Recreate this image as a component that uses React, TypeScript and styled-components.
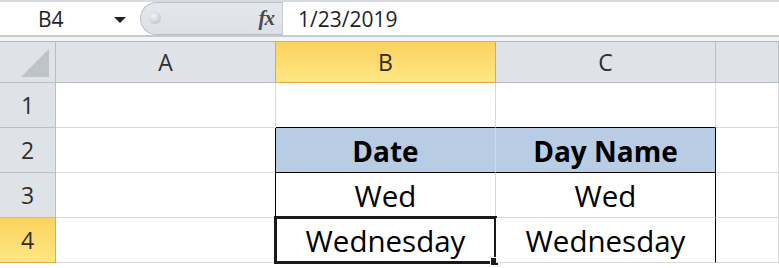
import styled, { createGlobalStyle } from 'styled-components';

const GlobalStyle = createGlobalStyle`
  html, body {
    margin: 0;
    padding: 0;
    background: #ffffff;
    overflow: hidden;
  }
`;

const Window = styled.div`
  width: 779px;
  height: 268px;
  overflow: hidden;
  font-family: 'Open Sans', 'Noto Sans', sans-serif;
  background: #ffffff;
`;

const FormulaBar = styled.div`
  display: flex;
  height: 35px;
  box-sizing: border-box;
  border-top: 2px solid #d7dbe1;
  background: #ffffff;
`;

const NameBox = styled.div`
  width: 140px;
  display: flex;
  align-items: center;
  box-sizing: border-box;
  padding-left: 38px;
  padding-right: 14px;
  font-size: 21px;
  color: #1f1f1f;
  justify-content: space-between;
`;

const DropArrow = styled.span`
  width: 0;
  height: 0;
  border-left: 6px solid transparent;
  border-right: 6px solid transparent;
  border-top: 6px solid #222;
  margin-top: 2px;
`;

const Pill = styled.div`
  width: 142px;
  display: flex;
  align-items: center;
  justify-content: space-between;
  box-sizing: border-box;
  background: linear-gradient(#e4e7ec, #dde1e7);
  border: 1px solid #b9bfc8;
  border-right: none;
  border-radius: 18px 0 0 18px;
  padding: 0 8px 0 8px;
`;

const Knob = styled.span`
  width: 12px;
  height: 12px;
  border-radius: 50%;
  background: radial-gradient(circle at 40% 35%, #f4f5f7, #b4b8be);
  margin-top: -2px;
`;

const Fx = styled.span`
  font-family: 'Liberation Serif', serif;
  font-style: italic;
  font-weight: bold;
  font-size: 21px;
  color: #4a4a4a;
  letter-spacing: -1px;
`;

const FormulaInput = styled.div`
  flex: 1;
  display: flex;
  align-items: center;
  padding-left: 15px;
  border-left: 1px solid #c8ccd2;
  font-size: 21px;
  color: #1f1f1f;
`;

const Splitter = styled.div`
  height: 7px;
  box-sizing: border-box;
  border-top: 2px solid #c6cbd2;
  border-bottom: 1px solid #aeb4bd;
  background: #f3f4f6;
`;

const Grid = styled.div`
  display: grid;
  grid-template-columns: 56px 220px 220px 220px 1fr;
  grid-template-rows: 41px repeat(4, 45px);
`;

const HeaderCell = styled.div<{ $active?: boolean }>`
  display: flex;
  align-items: center;
  justify-content: center;
  box-sizing: border-box;
  font-size: 23px;
  color: #2e2e2e;
  background: ${({ $active }) =>
    $active ? 'linear-gradient(#fbd25f, #ffe784)' : '#dfe3e8'};
  border-right: 1px solid ${({ $active }) => ($active ? '#e3a949' : '#b9bec5')};
  border-bottom: 1px solid ${({ $active }) => ($active ? '#e3a949' : '#b9bec5')};
  ${({ $active }) => ($active ? 'border-left: 1px solid #e3a949; margin-left: -1px;' : '')}
`;

const Corner = styled(HeaderCell)`
  align-items: flex-end;
  justify-content: flex-end;
  padding: 0 6px 5px 0;
`;

const CornerTriangle = styled.span`
  width: 0;
  height: 0;
  border-left: 28px solid transparent;
  border-bottom: 28px solid #bfc4ca;
`;

const Cell = styled.div<{
  $fill?: string;
  $bold?: boolean;
  $left?: boolean;
  $right?: boolean;
  $bottomDark?: boolean;
}>`
  position: relative;
  display: flex;
  align-items: flex-end;
  justify-content: center;
  box-sizing: border-box;
  padding-bottom: 7px;
  font-size: ${({ $bold }) => ($bold ? 28 : 29.5)}px;
  line-height: 1;
  font-weight: ${({ $bold }) => ($bold ? 700 : 400)};
  color: #000;
  background: ${({ $fill }) => $fill || '#ffffff'};
  border-right: 1px solid ${({ $right }) => ($right ? '#000' : '#dadada')};
  border-bottom: 1px solid ${({ $bottomDark }) => ($bottomDark ? '#000' : '#dadada')};
  ${({ $left }) => ($left ? 'border-left: 1px solid #000; margin-left: -1px;' : '')}
`;

const Selection = styled.div`
  position: absolute;
  left: -2px;
  top: -2px;
  right: -2px;
  bottom: -2px;
  border: 3px solid #1a1a1a;
  pointer-events: none;
`;

const FillHandle = styled.span`
  position: absolute;
  right: -5px;
  bottom: -5px;
  width: 7px;
  height: 7px;
  background: #1a1a1a;
  border: 1px solid #ffffff;
`;

const HEAD = '#b8cce4';

export default function App() {
  return (
    <Window>
      <GlobalStyle />
      <FormulaBar>
        <NameBox>
          <span>B4</span>
          <DropArrow />
        </NameBox>
        <Pill>
          <Knob />
          <Fx>fx</Fx>
        </Pill>
        <FormulaInput>1/23/2019</FormulaInput>
      </FormulaBar>
      <Splitter />
      <Grid>
        <Corner>
          <CornerTriangle />
        </Corner>
        <HeaderCell>A</HeaderCell>
        <HeaderCell $active>B</HeaderCell>
        <HeaderCell>C</HeaderCell>
        <HeaderCell />

        <HeaderCell>1</HeaderCell>
        <Cell />
        <Cell $bottomDark />
        <Cell $bottomDark />
        <Cell />

        <HeaderCell>2</HeaderCell>
        <Cell $right />
        <Cell $fill={HEAD} $bold $left $bottomDark>Date</Cell>
        <Cell $fill={HEAD} $bold $right $bottomDark>Day Name</Cell>
        <Cell />

        <HeaderCell>3</HeaderCell>
        <Cell $right />
        <Cell $left>Wed</Cell>
        <Cell $right>Wed</Cell>
        <Cell />

        <HeaderCell $active>4</HeaderCell>
        <Cell $right />
        <Cell $left>
          Wednesday
          <Selection>
            <FillHandle />
          </Selection>
        </Cell>
        <Cell $right>Wednesday</Cell>
        <Cell />
      </Grid>
    </Window>
  );
}
